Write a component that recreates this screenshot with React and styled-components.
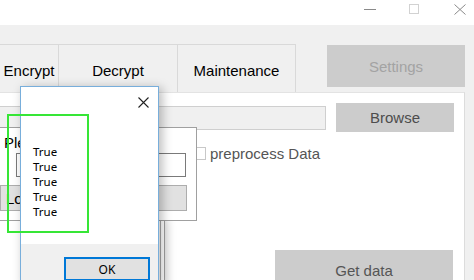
import styled, { createGlobalStyle } from "styled-components";

const Global = createGlobalStyle`
  html, body { margin: 0; padding: 0; }
  body { font-family: "Liberation Sans", Arial, sans-serif; background: #f0f0f0; }
`;

const Screen = styled.div`
  position: relative;
  width: 474px;
  height: 280px;
  overflow: hidden;
  display: flex;
  flex-direction: column;
  background: #f0f0f0;
`;

const TitleBar = styled.div`
  height: 25px;
  background: #fff;
  display: flex;
  align-items: center;
  padding-left: 347px;
`;

const Ctl = styled.div`
  flex: none;
  width: 45px;
  height: 25px;
  display: flex;
  align-items: center;
  justify-content: center;
  margin-top: -6px;
`;

const Body = styled.div`
  flex: 1;
  display: flex;
  flex-direction: column;
  padding-top: 19px;
`;

const TabRow = styled.div`
  display: flex;
  align-items: flex-start;
  height: 48px;
`;

const Tab = styled.div`
  width: ${(p) => p.w}px;
  height: 48px;
  box-sizing: border-box;
  border: 1px solid #d9d9d9;
  border-left: ${(p) => (p.first ? "none" : "1px solid #d9d9d9")};
  margin-left: ${(p) => (p.first ? 0 : -1)}px;
  border-bottom: none;
  background: #f0f0f0;
  display: flex;
  align-items: center;
  justify-content: center;
  padding-top: 3px;
  font-size: 15px;
  color: #000;
`;

const GreyButton = styled.div`
  box-sizing: border-box;
  width: ${(p) => p.w}px;
  height: ${(p) => p.h}px;
  background: #cccccc;
  display: flex;
  align-items: center;
  justify-content: center;
  font-size: 15px;
  color: ${(p) => p.fg};
`;

const Panel = styled.div`
  flex: 1;
  width: 465px;
  box-sizing: border-box;
  background: #fff;
  border-right: 1px solid #dcdcdc;
  border-top: 1px solid #e3e3e3;
  display: flex;
  flex-direction: column;
  padding: 10px 0 0 0;
`;

const Row = styled.div`
  display: flex;
  align-items: center;
`;

const Field = styled.div`
  box-sizing: border-box;
  width: 327px;
  height: 24px;
  margin-left: -1px;
  background: #f0f0f0;
  border: 1px solid #cfcfcf;
`;

const CheckRow = styled.div`
  display: flex;
  align-items: center;
  margin: 13px 0 0 193px;
  gap: 4px;
  font-size: 15px;
  color: #555;
`;

const Box = styled.div`
  width: 11px;
  height: 11px;
  border: 1px solid #c8c8c8;
  background: #fff;
`;

const BottomRow = styled.div`
  margin-top: auto;
  display: flex;
  padding-left: 275px;
`;

const BackWin = styled.div`
  position: absolute;
  left: -1px;
  top: 127px;
  width: 198px;
  height: 94px;
  box-sizing: border-box;
  border: 1px solid #a0a0a0;
  background: #fff;
  display: flex;
  flex-direction: column;
  padding: 6px 10px 0 4px;
  font-size: 15px;
  color: #000;
`;

const BackFrame = styled.div`
  position: absolute;
  left: 0;
  top: 220px;
  width: 165px;
  height: 70px;
  box-sizing: border-box;
  background: #fff;
  border-right: 1px solid #a0a0a0;
  border-top: 1px solid #a0a0a0;
  box-shadow: inset -3px 0 0 #fff, inset -4px 0 0 #a8a8a8, 4px 0 8px rgba(0, 0, 0, 0.12);
`;

const BackField = styled.div`
  margin-top: 2px;
  align-self: flex-end;
  width: 170px;
  height: 24px;
  box-sizing: border-box;
  border: 1px solid #7a7a7a;
`;

const BackBtn = styled.div`
  margin-top: 8px;
  margin-left: -4px;
  width: 187px;
  height: 26px;
  box-sizing: border-box;
  border: 1px solid #adadad;
  background: #e1e1e1;
  display: flex;
  align-items: center;
  padding-left: 5px;
`;

const Dialog = styled.div`
  position: absolute;
  left: 20px;
  top: 86px;
  width: 139px;
  height: 200px;
  box-sizing: border-box;
  border: 1px solid #78aedb;
  background: #fff;
  box-shadow: 3px 2px 10px rgba(0, 0, 0, 0.28);
  display: flex;
  flex-direction: column;
  font-family: "Noto Sans", "Open Sans", sans-serif;
`;

const DlgTop = styled.div`
  display: flex;
  justify-content: flex-end;
  padding: 10px 9px 0 0;
  height: 30px;
  box-sizing: border-box;
`;

const Lines = styled.div`
  padding: 27px 0 0 12px;
  height: 127px;
  box-sizing: border-box;
  font-size: 11.5px;
  line-height: 15px;
  color: #000;
`;

const DlgFooter = styled.div`
  flex: 1;
  background: #f0f0f0;
  padding: 13px 0 0 43px;
`;

const OkBtn = styled.div`
  width: 86px;
  height: 24px;
  box-sizing: border-box;
  border: 2px solid #0078d7;
  background: #e1e1e1;
  display: flex;
  align-items: center;
  justify-content: center;
  font-size: 12px;
  color: #000;
`;

const Marker = styled.div`
  position: absolute;
  left: 7px;
  top: 114px;
  width: 82px;
  height: 119px;
  box-sizing: border-box;
  border: 2px solid #36e636;
  pointer-events: none;
`;

export default function App() {
  return (
    <>
      <Global />
      <Screen>
        <TitleBar>
          <Ctl>
            <svg width="12" height="11" viewBox="0 0 12 11">
              <path d="M0 5.5H12" stroke="#8a8a8a" strokeWidth="1" />
            </svg>
          </Ctl>
          <Ctl>
            <svg width="11" height="11" viewBox="0 0 11 11">
              <rect x="0.5" y="0.5" width="9" height="9" fill="none" stroke="#d2d2d2" />
            </svg>
          </Ctl>
          <Ctl>
            <svg width="14" height="11" viewBox="0 0 14 11">
              <path d="M1.5 0.5L12.5 10.5M12.5 0.5L1.5 10.5" stroke="#8a8a8a" strokeWidth="1" />
            </svg>
          </Ctl>
        </TitleBar>
        <Body>
          <TabRow>
            <Tab w={59} first>Encrypt</Tab>
            <Tab w={120}>Decrypt</Tab>
            <Tab w={119}>Maintenance</Tab>
            <div style={{ width: 31 }} />
            <GreyButton w={138} h={42} fg="#a3a3a3" style={{ marginTop: 1 }}>
              Settings
            </GreyButton>
          </TabRow>
          <Panel>
            <Row>
              <Field />
              <div style={{ width: 10 }} />
              <GreyButton w={118} h={29} fg="#4d4d4d">
                Browse
              </GreyButton>
            </Row>
            <CheckRow>
              <Box />
              preprocess Data
            </CheckRow>
            <BottomRow>
              <GreyButton w={178} h={30} fg="#555">
                <span style={{ marginTop: 11 }}>Get data</span>
              </GreyButton>
            </BottomRow>
          </Panel>
        </Body>

        <BackFrame />
        <BackWin>
          <span>Ple</span>
          <BackField />
          <BackBtn>Lo</BackBtn>
        </BackWin>

        <Dialog>
          <DlgTop>
            <svg width="11" height="11" viewBox="0 0 11 11">
              <path d="M0.5 0.5L10.5 10.5M10.5 0.5L0.5 10.5" stroke="#222" strokeWidth="1.1" />
            </svg>
          </DlgTop>
          <Lines>
            <div>True</div>
            <div>True</div>
            <div>True</div>
            <div>True</div>
            <div>True</div>
          </Lines>
          <DlgFooter>
            <OkBtn>OK</OkBtn>
          </DlgFooter>
        </Dialog>

        <Marker />
      </Screen>
    </>
  );
}
